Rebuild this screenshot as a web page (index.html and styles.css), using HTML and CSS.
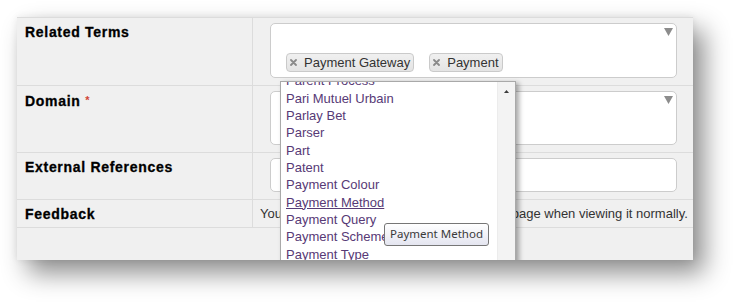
FILE: index.html
```html
<!DOCTYPE html>
<html>
<head>
<meta charset="utf-8">
<link rel="stylesheet" href="styles.css">
</head>
<body>
<div class="stage">
  <div class="panel">
    <div class="row r1">
      <div class="label">Related Terms</div>
      <div class="value">
        <div class="box box-terms">
          <div class="chips">
            <span class="chip"><svg class="x" width="7" height="7" viewBox="0 0 7 7"><path d="M1 1L6 6M6 1L1 6" stroke="#8a8a8a" stroke-width="1.8" stroke-linecap="round"/></svg>Payment Gateway</span>
            <span class="chip"><svg class="x" width="7" height="7" viewBox="0 0 7 7"><path d="M1 1L6 6M6 1L1 6" stroke="#8a8a8a" stroke-width="1.8" stroke-linecap="round"/></svg>Payment</span>
          </div>
          <svg class="arrow" width="9" height="8" viewBox="0 0 9 8"><path d="M0 0H9L4.5 8Z" fill="#8c8c8c"/></svg>
        </div>
      </div>
    </div>
    <div class="row r2">
      <div class="label">Domain <span class="req">*</span></div>
      <div class="value">
        <div class="box box-domain">
          <div class="chips"></div>
          <svg class="arrow" width="9" height="8" viewBox="0 0 9 8"><path d="M0 0H9L4.5 8Z" fill="#8c8c8c"/></svg>
        </div>
      </div>
    </div>
    <div class="row r3">
      <div class="label">External References</div>
      <div class="value">
        <div class="box box-ext"></div>
      </div>
    </div>
    <div class="row r4">
      <div class="label">Feedback</div>
      <div class="value text">You can only provide feedback on this term page when viewing it normally.</div>
    </div>
    <div class="row r5"></div>

    <div class="dropdown">
      <ul class="list">
        <li>Parent Process</li>
        <li>Pari Mutuel Urbain</li>
        <li>Parlay Bet</li>
        <li>Parser</li>
        <li>Part</li>
        <li>Patent</li>
        <li>Payment Colour</li>
        <li class="hover">Payment Method</li>
        <li>Payment Query</li>
        <li>Payment Scheme</li>
        <li>Payment Type</li>
        <li>Payroll</li>
      </ul>
      <div class="scrollbar">
        <svg class="up" width="5" height="3" viewBox="0 0 5 3"><path d="M0 3H5L2.5 0Z" fill="#3c3c3c"/></svg>
      </div>
    </div>
    <div class="tip">Payment Method</div>
  </div>
</div>
</body>
</html>
```
FILE: styles.css
```css
html, body {
  margin: 0;
  padding: 0;
  background: #ffffff;
}
body {
  min-height: 308px;
}
.stage {
  padding: 17px 0 0 17px;
  font-family: "Liberation Sans", Arial, sans-serif;
  font-size: 13px;
  color: #333333;
}
.panel {
  position: relative;
  overflow: hidden;
  width: 676px;
  height: 243px;
  box-sizing: border-box;
  background: #f0f0f0;
  border-top: 1px solid #dcdcdc;
  box-shadow: 11px 13px 24px rgba(0, 0, 0, 0.45), 0 0 7px rgba(0, 0, 0, 0.08);
}
.row {
  display: grid;
  grid-template-columns: 236px 1fr;
  border-bottom: 1px solid #dcdcdc;
}
.r5 {
  border-bottom: none;
  height: 32px;
}
.label {
  box-sizing: border-box;
  border-right: 1px solid #dcdcdc;
  padding: 6px 8px 4px;
  font-weight: bold;
  font-size: 14px;
  letter-spacing: 0.7px;
  line-height: 17px;
  color: #000000;
  -webkit-text-stroke: 0.3px #000;
}
.req {
  color: #d04437;
  font-size: 11px;
  letter-spacing: 0;
  vertical-align: 2px;
  -webkit-text-stroke: 0;
}
.value {
  padding: 5px 16px 7px 7px;
}
.value.text {
  line-height: 16px;
  padding-top: 6px;
  padding-bottom: 5px;
  white-space: nowrap;
}
.box {
  margin-left: 10px;
  box-sizing: border-box;
  background: #ffffff;
  border: 1px solid #cccccc;
  border-radius: 5px;
  display: flex;
}
.box-terms { height: 55px; }
.box-domain { height: 54px; }
.box-ext { height: 34px; }
.chips {
  flex: 1;
  display: flex;
  align-items: flex-end;
  gap: 15px;
  padding: 0 0 5px 15px;
}
.chip {
  display: inline-flex;
  align-items: center;
  box-sizing: border-box;
  height: 19px;
  padding: 0 3px 0 2px;
  border: 1px solid #cacaca;
  border-radius: 4px;
  background: linear-gradient(#f0f0f0, #e4e4e4);
  color: #333333;
  font-size: 13px;
}
.chip .x {
  margin: 0 7px 0 1px;
}
.arrow {
  margin: 4px 3px 0 0;
}
.dropdown {
  position: absolute;
  left: 263px;
  top: 63px;
  width: 236px;
  height: 220px;
  box-sizing: border-box;
  background: #ffffff;
  border: 1px solid #a9a9a9;
  box-shadow: 3px 2px 5px rgba(0, 0, 0, 0.35);
  display: flex;
}
.list {
  flex: 1;
  margin: 0;
  padding: 0;
  list-style: none;
  overflow: hidden;
}
.list li {
  padding-left: 5px;
  line-height: 17.33px;
  color: #573a76;
  white-space: nowrap;
}
.list li:first-child {
  margin-top: -9.7px;
}
.list li.hover {
  text-decoration: underline;
}
.scrollbar {
  width: 17px;
  background: #f3f3f3;
  border-left: 1px solid #ececec;
  display: flex;
  justify-content: center;
  align-items: flex-start;
}
.scrollbar .up {
  margin-top: 8px;
}
.tip {
  position: absolute;
  left: 367px;
  top: 205px;
  width: 105px;
  height: 23px;
  box-sizing: border-box;
  border: 1px solid #767676;
  border-radius: 3px;
  background: linear-gradient(#ffffff, #e4e5f0);
  font-family: "Noto Sans", "Open Sans", sans-serif;
  font-size: 11.5px;
  line-height: 20px;
  color: #3a3a3a;
  padding: 0 5px;
  white-space: nowrap;
}
```
